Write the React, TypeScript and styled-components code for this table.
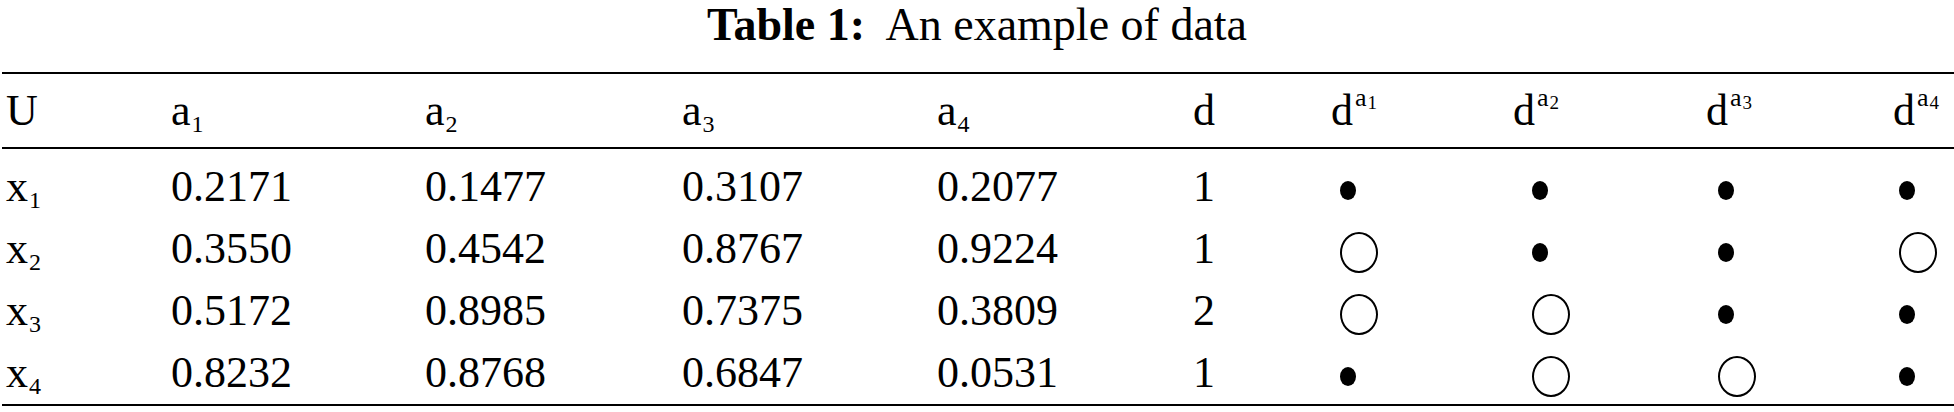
import styled, { createGlobalStyle } from 'styled-components'

const GlobalStyle = createGlobalStyle`
  html, body {
    margin: 0;
    padding: 0;
    background: #ffffff;
  }
  body {
    font-family: 'Liberation Serif', 'Times New Roman', serif;
    color: #000000;
  }
`

const COLUMNS = '165px 254px 257px 255px 256px 138px 182px 193px 187px 1fr'

const Page = styled.div`
  width: 1954px;
  height: 412px;
  overflow: hidden;
`

const Caption = styled.div`
  text-align: center;
  font-size: 46px;
  line-height: 50px;
  height: 50px;
  margin-bottom: 22px;
  white-space: pre;

  b {
    font-weight: bold;
  }
`

const Table = styled.div`
  margin-left: 2px;
  border-top: 2px solid #000;
  border-bottom: 2px solid #000;
`

type RowProps = {
  $head?: boolean
}
const Row = styled.div<RowProps>`
  display: grid;
  grid-template-columns: ${COLUMNS};
  padding-left: 4px;
  font-size: 44px;
  height: ${(p) => (p.$head ? '73px' : '62px')};
  line-height: ${(p) => (p.$head ? '73px' : '62px')};
  border-bottom: ${(p) => (p.$head ? '2px solid #000' : 'none')};
`

const Body = styled.div`
  padding-top: 7px;
`

const Cell = styled.div`
  white-space: nowrap;
`

const Sub = styled.span`
  font-size: 24px;
  line-height: 0;
  vertical-align: -7px;
  margin-left: 1px;
`

const Sup = styled.span`
  font-size: 26px;
  line-height: 0;
  vertical-align: 19px;
  margin-left: 2px;
`

const SupSub = styled.span`
  font-size: 19px;
  line-height: 0;
  vertical-align: -3px;
  margin-left: 1px;
`

type MarkCellProps = {
  $shift: number
}
const MarkCell = styled.div<MarkCellProps>`
  display: flex;
  align-items: center;
  height: 100%;
  padding-top: 7px;
  box-sizing: border-box;
  padding-left: ${(p) => p.$shift}px;
`

type MarkProps = {
  $filled: boolean
}
const Mark = styled.span<MarkProps>`
  display: block;
  border-radius: 50%;
  box-sizing: border-box;
  width: ${(p) => (p.$filled ? '16px' : '38px')};
  height: ${(p) => (p.$filled ? '19px' : '41px')};
  background: ${(p) => (p.$filled ? '#000' : 'transparent')};
  border: ${(p) => (p.$filled ? 'none' : '2px solid #000')};
`

// left edge of the marks inside each d^a column
const SHIFTS = [9, 19, 12, 6]

const ROWS = [
  { id: 1, values: ['0.2171', '0.1477', '0.3107', '0.2077'], d: '1', marks: [1, 1, 1, 1] },
  { id: 2, values: ['0.3550', '0.4542', '0.8767', '0.9224'], d: '1', marks: [0, 1, 1, 0] },
  { id: 3, values: ['0.5172', '0.8985', '0.7375', '0.3809'], d: '2', marks: [0, 0, 1, 1] },
  { id: 4, values: ['0.8232', '0.8768', '0.6847', '0.0531'], d: '1', marks: [1, 0, 0, 1] },
]

export default function App() {
  return (
    <Page>
      <GlobalStyle />
      <Caption>
        <b>Table 1:</b>{'  '}An example of data
      </Caption>
      <Table>
        <Row $head>
          <Cell>U</Cell>
          {[1, 2, 3, 4].map((n) => (
            <Cell key={n}>
              a<Sub>{n}</Sub>
            </Cell>
          ))}
          <Cell>d</Cell>
          {[1, 2, 3, 4].map((n) => (
            <Cell key={n}>
              d
              <Sup>
                a<SupSub>{n}</SupSub>
              </Sup>
            </Cell>
          ))}
        </Row>
        <Body>
          {ROWS.map((row) => (
            <Row key={row.id}>
              <Cell>
                x<Sub>{row.id}</Sub>
              </Cell>
              {row.values.map((v, i) => (
                <Cell key={i}>{v}</Cell>
              ))}
              <Cell>{row.d}</Cell>
              {row.marks.map((m, i) => (
                <MarkCell key={i} $shift={SHIFTS[i]}>
                  <Mark $filled={m === 1} />
                </MarkCell>
              ))}
            </Row>
          ))}
        </Body>
      </Table>
    </Page>
  )
}
